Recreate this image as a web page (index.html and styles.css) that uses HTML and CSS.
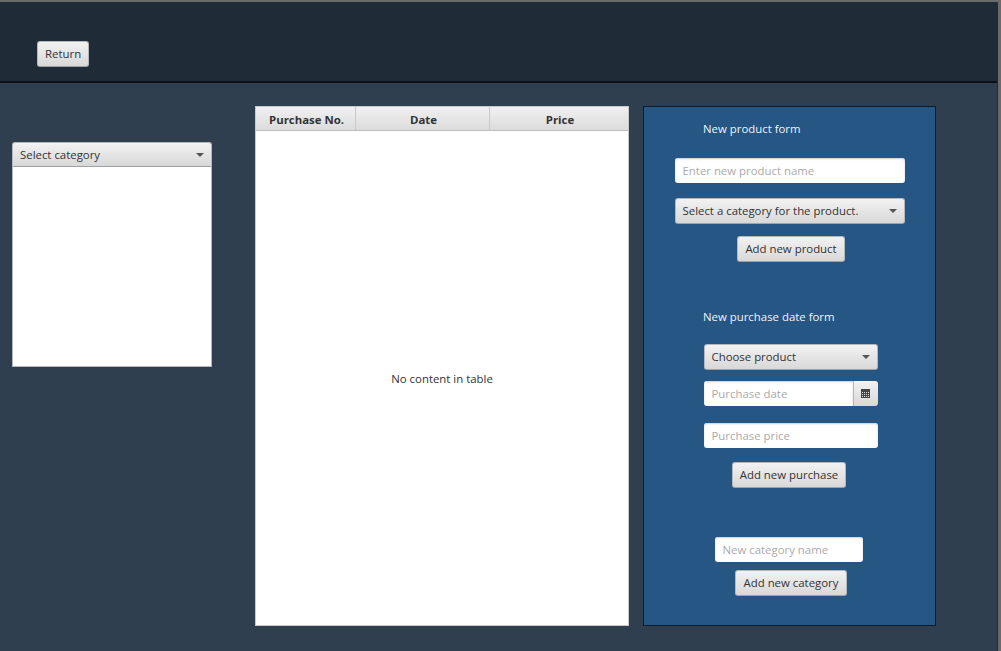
FILE: index.html
```html
<!DOCTYPE html>
<html lang="en">
<head>
    <meta charset="UTF-8">
    <meta name="viewport" content="width=device-width, initial-scale=1.0">
    <title>Purchases</title>
    <link rel="stylesheet" href="styles.css">
</head>
<body>
    <div class="window">
        <header class="topbar">
            <button class="btn">Return</button>
        </header>

        <main class="content">
            <!-- category list -->
            <section class="categories">
                <div class="combo combo-flat">
                    <span>Select category</span>
                    <span class="arrow"></span>
                </div>
                <div class="list"></div>
            </section>

            <!-- purchase table -->
            <section class="table">
                <div class="table-head">
                    <div class="col col-no">Purchase No.</div>
                    <div class="col col-date">Date</div>
                    <div class="col col-price">Price</div>
                </div>
                <div class="table-body">No content in table</div>
            </section>

            <!-- forms -->
            <section class="panel">
                <div class="form form-product">
                    <div class="form-title">New product form</div>
                    <div class="field field-wide placeholder">Enter new product name</div>
                    <div class="combo field-wide">
                        <span>Select a category for the product.</span>
                        <span class="arrow"></span>
                    </div>
                    <button class="btn btn-add">Add new product</button>
                </div>

                <div class="form form-purchase">
                    <div class="form-title">New purchase date form</div>
                    <div class="combo field-mid">
                        <span>Choose product</span>
                        <span class="arrow"></span>
                    </div>
                    <div class="date field-mid">
                        <div class="date-input placeholder">Purchase date</div>
                        <div class="date-btn">
                            <svg width="9" height="9" viewBox="0 0 9 9">
                                <path fill="#444" d="M0 0h9v9H0z"/>
                                <path fill="#ddd" d="M1 3h1v1H1zM3 3h1v1H3zM5 3h1v1H5zM7 3h1v1H7zM1 5h1v1H1zM3 5h1v1H3zM5 5h1v1H5zM7 5h1v1H7zM1 7h1v1H1zM3 7h1v1H3zM5 7h1v1H5zM7 7h1v1H7z"/>
                            </svg>
                        </div>
                    </div>
                    <div class="field field-mid field-price placeholder">Purchase price</div>
                    <button class="btn btn-add">Add new purchase</button>
                </div>

                <div class="form form-category">
                    <div class="field field-small placeholder">New category name</div>
                    <button class="btn btn-add">Add new category</button>
                </div>
            </section>
        </main>
    </div>
</body>
</html>
```

FILE: styles.css
```css
* {
    box-sizing: border-box;
}

html, body {
    margin: 0;
    height: 100%;
}

body {
    font-family: "Open Sans", "Liberation Sans", sans-serif;
    font-size: 11.4px;
    color: #333;
    background-color: #6a6a6a;
    overflow: hidden;
}

.window {
    width: 998px;
    height: 649px;
    margin-top: 2px;
    display: flex;
    flex-direction: column;
    background-color: #303f4f;
    border-right: 1px solid #222c36;
}

/* top bar */
.topbar {
    flex: none;
    height: 81px;
    padding: 39px 0 0 37px;
    background-color: #1f2b36;
    border-bottom: 2px solid #0d1116;
}

.content {
    display: flex;
    align-items: flex-start;
}

/* buttons and combos */
.btn {
    height: 26px;
    padding: 0 7px 2px;
    font-family: inherit;
    font-size: 11.4px;
    color: #333;
    border: 1px solid #b5b8bb;
    border-bottom-color: #9fa3a6;
    border-radius: 3px;
    background: linear-gradient(#f2f2f2, #d8d8d8);
}

.combo {
    height: 26px;
    padding: 0 7px 1px 7px;
    display: flex;
    justify-content: space-between;
    align-items: center;
    border: 1px solid #b5b8bb;
    border-bottom-color: #9fa3a6;
    border-radius: 3px;
    background: linear-gradient(#f2f2f2, #d8d8d8);
}

.arrow {
    width: 0;
    height: 0;
    border-left: 4px solid transparent;
    border-right: 4px solid transparent;
    border-top: 4px solid #555;
}

/* left column */
.categories {
    flex: none;
    width: 200px;
    margin: 59px 43px 0 12px;
}

.combo-flat {
    height: 25px;
    padding-bottom: 0;
    border-radius: 3px 3px 0 0;
}

.list {
    height: 200px;
    background-color: #fff;
    border: 1px solid #b5b8bb;
    border-top: 0;
}

/* table */
.table {
    flex: none;
    width: 374px;
    height: 520px;
    margin-top: 23px;
    display: flex;
    flex-direction: column;
    background-color: #fff;
    border: 1px solid #c8c8c8;
}

.table-head {
    height: 24px;
    display: flex;
    font-weight: 700;
    border-bottom: 1px solid #bdbdbd;
    background: linear-gradient(#f0f0f0, #dcdcdc);
}

.col {
    padding-left: 2px;
    line-height: 25px;
    text-align: center;
    border-right: 1px solid #c8c8c8;
}

.col-no { width: 100px; }
.col-date { width: 134px; }
.col-price { flex: 1; border-right: 0; }

.table-body {
    flex: 1;
    display: flex;
    justify-content: center;
    align-items: center;
    padding-top: 1px;
}

/* right panel */
.panel {
    flex: none;
    width: 293px;
    height: 520px;
    margin: 23px 0 0 14px;
    display: flex;
    flex-direction: column;
    background-color: #265684;
    border: 1px solid #0d1b2a;
}

.form {
    display: flex;
    flex-direction: column;
    align-items: center;
}

.form-title {
    align-self: flex-start;
    margin-left: 59px;
    color: #f0f4f8;
    line-height: 16px;
}

.form-product {
    padding-top: 14px;
}

.form-purchase {
    padding-top: 47px;
}

.form-category {
    padding-top: 49px;
}

.field {
    height: 25px;
    padding-left: 8px;
    line-height: 26px;
    background-color: #fff;
    border-radius: 3px;
    box-shadow: inset 0 1px 2px #ccc;
}

.placeholder {
    color: #aaa;
}

.field-wide { width: 230px; }
.field-mid { width: 174px; margin-left: 2px; }
.field-small { width: 148px; margin-left: -2px; }

.form-product .field { margin-top: 21px; }
.form-product .combo { margin-top: 15px; }
.form-product .btn { margin-top: 12px; margin-left: 3px; }

.form-purchase .combo { margin-top: 19px; }
.form-purchase .date { margin-top: 11px; }
.form-purchase .field-price { margin-top: 17px; }
.form-purchase .btn { margin-top: 14px; margin-left: -1px; }

.form-category .btn { margin-top: 8px; margin-left: 3px; padding: 0 8px 2px; }

.date {
    height: 25px;
    display: flex;
    border-radius: 3px;
    overflow: hidden;
}

.date-input {
    flex: 1;
    padding-left: 8px;
    line-height: 26px;
    background-color: #fff;
    box-shadow: inset 0 1px 2px #ccc;
}

.date-btn {
    width: 25px;
    display: flex;
    justify-content: center;
    align-items: center;
    border-left: 1px solid #b5b8bb;
    background: linear-gradient(#f2f2f2, #d8d8d8);
}
```
